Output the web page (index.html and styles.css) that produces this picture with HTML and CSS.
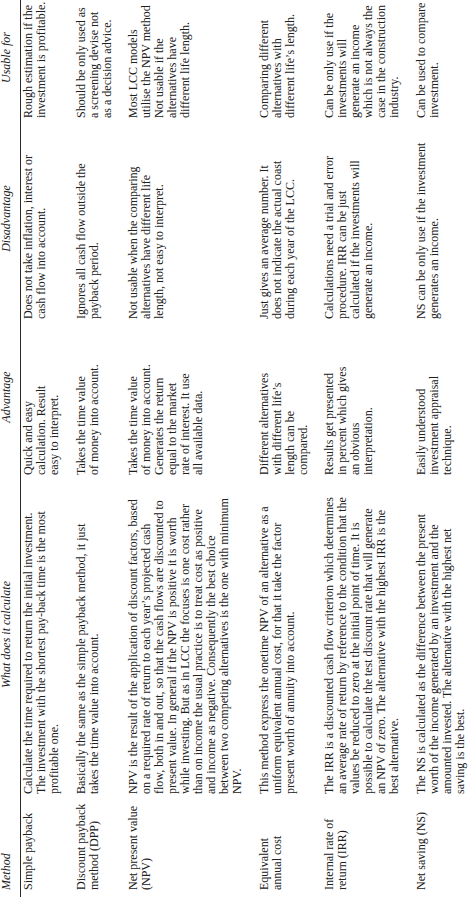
FILE: index.html
```html
<!DOCTYPE html>
<html>
<head>
<meta charset="utf-8">
<link rel="stylesheet" href="styles.css">
</head>
<body>
<div class="viewport">
  <div class="sheet">
    <div class="row head">
      <div class="cell first">Method</div>
      <div class="cell">What does it calculate</div>
      <div class="cell">Advantage</div>
      <div class="cell">Disadvantage</div>
      <div class="cell">Usable for</div>
    </div>
    <div class="row">
      <div class="cell first">Simple payback</div>
      <div class="cell">Calculate the time required to return the initial investment.<br>The investment with the shortest pay-back time is the most<br>profitable one.</div>
      <div class="cell">Quick and easy<br>calculation. Result<br>easy to interpret.</div>
      <div class="cell">Does not take inflation, interest or<br>cash flow into account.</div>
      <div class="cell">Rough estimation if the<br>investment is profitable.</div>
    </div>
    <div class="row">
      <div class="cell first">Discount payback<br>method (DPP)</div>
      <div class="cell">Basically the same as the simple payback method, it just<br>takes the time value into account.</div>
      <div class="cell">Takes the time value<br>of money into account.</div>
      <div class="cell">Ignores all cash flow outside the<br>payback period.</div>
      <div class="cell">Should be only used as<br>a screening devise not<br>as a decision advice.</div>
    </div>
    <div class="row">
      <div class="cell first">Net present value<br>(NPV)</div>
      <div class="cell">NPV is the result of the application of discount factors, based<br>on a required rate of return to each year’s projected cash<br>flow, both in and out, so that the cash flows are discounted to<br>present value. In general if the NPV is positive it is worth<br>while investing. But as in LCC the focuses is one cost rather<br>than on income the usual practice is to treat cost as positive<br>and income as negative. Consequently the best choice<br>between two competing alternatives is the one with minimum<br>NPV.</div>
      <div class="cell">Takes the time value<br>of money into account.<br>Generates the return<br>equal to the market<br>rate of interest. It use<br>all available data.</div>
      <div class="cell">Not usable when the comparing<br>alternatives have different life<br>length, not easy to interpret.</div>
      <div class="cell">Most LCC models<br>utilise the NPV method<br>Not usable if the<br>alternatives have<br>different life length.</div>
    </div>
    <div class="row">
      <div class="cell first">Equivalent<br>annual cost</div>
      <div class="cell">This method express the onetime NPV of an alternative as a<br>uniform equivalent annual cost, for that it take the factor<br>present worth of annuity into account.</div>
      <div class="cell">Different alternatives<br>with different life’s<br>length can be<br>compared.</div>
      <div class="cell">Just gives an average number. It<br>does not indicate the actual coast<br>during each year of the LCC.</div>
      <div class="cell">Comparing different<br>alternatives with<br>different life’s length.</div>
    </div>
    <div class="row">
      <div class="cell first">Internal rate of<br>return (IRR)</div>
      <div class="cell">The IRR is a discounted cash flow criterion which determines<br>an average rate of return by reference to the condition that the<br>values be reduced to zero at the initial point of time. It is<br>possible to calculate the test discount rate that will generate<br>an NPV of zero. The alternative with the highest IRR is the<br>best alternative.</div>
      <div class="cell">Results get presented<br>in percent which gives<br>an obvious<br>interpretation.</div>
      <div class="cell">Calculations need a trial and error<br>procedure. IRR can be just<br>calculated if the investments will<br>generate an income.</div>
      <div class="cell">Can be only use if the<br>investments will<br>generate an income<br>which is not always the<br>case in the construction<br>industry.</div>
    </div>
    <div class="row">
      <div class="cell first">Net saving (NS)</div>
      <div class="cell">The NS is calculated as the difference between the present<br>worth of the income generated by an investment and the<br>amounted invested. The alternative with the highest net<br>saving is the best.</div>
      <div class="cell">Easily understood<br>investment appraisal<br>technique.</div>
      <div class="cell">NS can be only use if the investment<br>generates an income.</div>
      <div class="cell">Can be used to compare<br>investment.</div>
    </div>
  </div>
</div>
</body>
</html>
```
FILE: styles.css
```css
html, body {
  margin: 0;
  padding: 0;
  background: #ffffff;
}
.viewport {
  width: 474px;
  height: 900px;
  overflow: hidden;
  position: relative;
}
.sheet {
  width: 900px;
  height: 474px;
  transform-origin: 0 0;
  transform: translateY(900px) rotate(-90deg);
  font-family: "Liberation Serif", "Times New Roman", serif;
  font-size: 12px;
  line-height: 13px;
  color: #202020;
}
.row {
  display: grid;
  grid-template-columns: 103px 319px 156px 201px 121px;
  padding-bottom: 13.6px;
}
.cell {
  white-space: nowrap;
}
.cell.first {
  padding-left: 7px;
}
.head {
  margin-top: -3px;
  padding-bottom: 7px;
  border-bottom: 1.6px solid #2a2a2a;
  margin-bottom: 1px;
  font-style: italic;
}
.head .cell {
  text-align: center;
}
.head .cell.first {
  text-align: left;
}
```
